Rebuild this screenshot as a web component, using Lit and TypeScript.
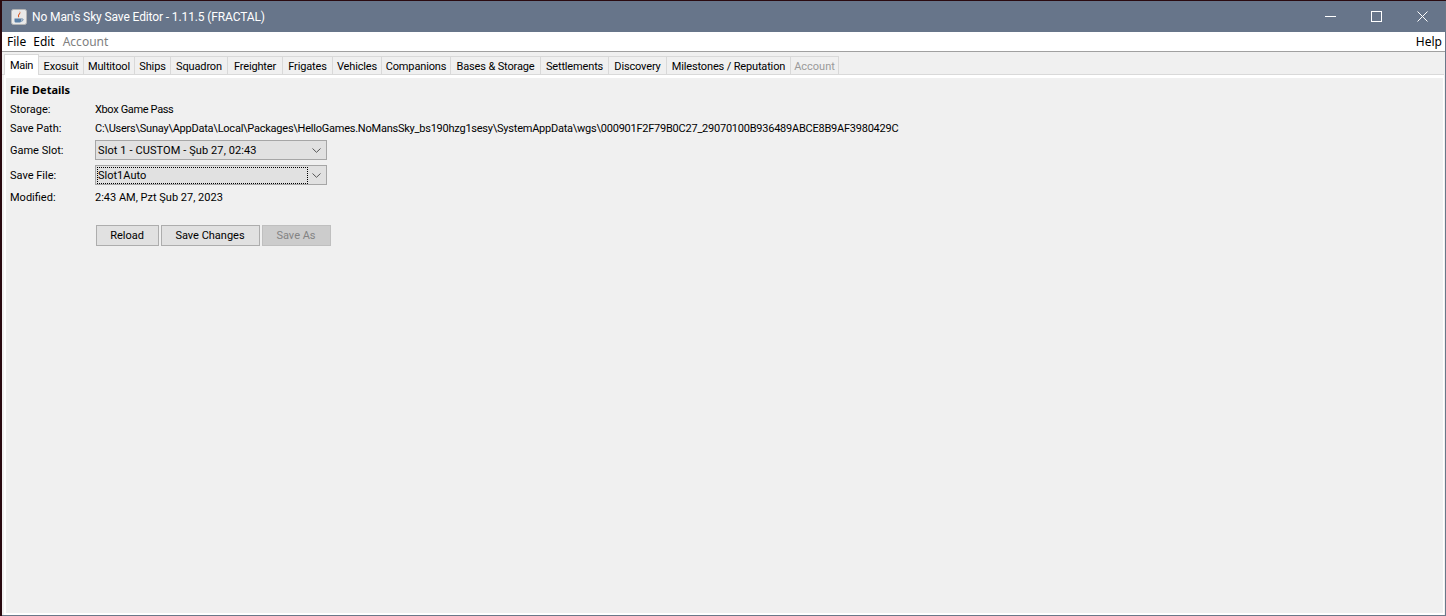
import { LitElement, html, css, svg } from "lit";
import { customElement } from "lit/decorators.js";

const TABS: [string, number][] = [
  ["Main", 35], ["Exosuit", 45], ["Multitool", 51], ["Ships", 36], ["Squadron", 57],
  ["Freighter", 55], ["Frigates", 50], ["Vehicles", 49], ["Companions", 69],
  ["Bases & Storage", 90], ["Settlements", 68], ["Discovery", 58],
  ["Milestones / Reputation", 124], ["Account", 48],
];

const chevron = svg`<svg class="chev" width="9" height="5" viewBox="0 0 9 5"><path d="M.5.500 4.500 4.300 8.500.500" fill="none" stroke="#555" stroke-width="1"/></svg>`;

@customElement("app-root")
export class AppRoot extends LitElement {
  static styles = css`
    :host { display: block; width: 1446px; height: 616px; background: #2a0a10; overflow: hidden;
      font-family: Roboto, Tahoma, sans-serif; font-size: 11px; color: #000; }
    .win { box-sizing: border-box; height: 616px; margin-left: 2px; margin-top: 1px; display: flex; flex-direction: column;
      background: #f0f0f0; border-right: 1px solid #6a7889; border-bottom: 2px solid #6a7889; }
    .title { height: 31px; flex: none; background: #67758a; color: #fff; display: flex; align-items: center; font-size: 12px; letter-spacing: -0.12px; }
    .appicon { margin-left: 9px; margin-right: 5px; }
    .title .t { flex: 1; }
    .wbtn { width: 46px; height: 31px; display: flex; align-items: center; justify-content: center; }
    .menu { height: 19px; flex: none; background: #fff; border-bottom: 1px solid #a0a0a0; display: flex; align-items: center; font-family: "Noto Sans", sans-serif; font-size: 12px; padding: 0 3px 0 5px; gap: 7px; }
    .menu .off { color: #808080; margin-left: 1px; }
    .menu .sp { flex: 1; }
    .tabs { display: flex; align-items: flex-end; height: 23px; flex: none; padding-left: 2px; box-sizing: border-box; border-bottom: 1px solid #d9d9d9; margin-right: 1px; }
    .tab { box-sizing: border-box; height: 19px; margin-bottom: -1px; text-align: center; line-height: 19px; border: 1px solid #d9d9d9; border-left: 0; background: #f0f0f0; white-space: nowrap; letter-spacing: -0.15px; }
    .tab.on { height: 21px; background: #fff; border-left: 1px solid #d9d9d9; border-bottom: 0; line-height: 21px; letter-spacing: -0.3px; }
    .tab.off { color: #9a9a9a; letter-spacing: 0; }
    .panel { flex: 1; margin: 0 1px 0 2px; border-top: 3px solid #fff; border-left: 2px solid #fff; border-right: 1px solid #fff; border-bottom: 2px solid #fff; padding: 5px 0 0 4px; }
    h3 { margin: 0; font: bold 11px "Noto Sans", sans-serif; height: 17px; line-height: 14px; }
    .form { display: grid; grid-template-columns: 85px 1fr; align-items: center; }
    .r1 { height: 19px; line-height: 19px; white-space: nowrap; }
    .xbox { letter-spacing: -0.35px; }
    .path { letter-spacing: -0.235px; }
    .slot { letter-spacing: 0.1px; }
    .combo { box-sizing: border-box; width: 232px; height: 20px; border: 1px solid #a6a6a6; background: #e1e1e1; display: flex; align-items: center; padding-left: 2px; }
    .combo .v { flex: 1; }
    .combo .v.focus { outline: 1px dotted #000; height: 15px; line-height: 15px; flex: none; width: 209px; }
    .chev { margin: 0 5px 0 auto; }
    .gap2b { margin-bottom: 2px; }
    .gap5 { margin-bottom: 5px; }
    .gap3t { margin-top: 3px; }
    .btns { display: flex; gap: 2px; margin: 18px 0 0 86px; }
    .btn { box-sizing: border-box; height: 21px; line-height: 19px; text-align: center; border: 1px solid #adadad; background: #e1e1e1; padding-right: 1px; }
    .btn.off { background: #cccccc; border-color: #bfbfbf; color: #838383; }
  `;

  render() {
    return html`<div class="win">
      <div class="title">
        <svg class="appicon" width="16" height="16" viewBox="0 0 16 16">
          <rect x=".5" y=".5" width="15" height="15" rx="2" fill="#e9e9e9" stroke="#b5b5b5"/>
          <path d="M8.500 2C10 4 6.500 5 7 7.500 7.500 9 8.500 8.500 8 7 7.500 5.500 11 4.500 8.500 2Z" fill="#d9541e"/>
          <path d="M3.500 9.500h6.500v2.500c0 1-.8 1.500-1.500 1.500h-3.500c-.8 0-1.500-.5-1.500-1.500Z" fill="#5a7fa6"/>
          <path d="M10 10h1.500c1 0 1 2-1.500 2.200" fill="none" stroke="#5a7fa6"/>
        </svg>
        <span class="t">No Man's Sky Save Editor - 1.11.5 (FRACTAL)</span>
        <div class="wbtn"><svg width="11" height="11" viewBox="0 0 11 11"><path d="M0 5.500h11" stroke="#fff"/></svg></div>
        <div class="wbtn"><svg width="11" height="11" viewBox="0 0 11 11"><rect x=".5" y=".5" width="10" height="10" fill="none" stroke="#fff"/></svg></div>
        <div class="wbtn"><svg width="11" height="11" viewBox="0 0 11 11"><path d="M.5.500l10 10M10.500.500l-10 10" stroke="#fff"/></svg></div>
      </div>
      <div class="menu"><span>File</span><span>Edit</span><span class="off">Account</span><span class="sp"></span><span>Help</span></div>
      <div class="tabs">
        ${TABS.map(([n, w], i) => html`<div class="tab ${i === 0 ? "on" : ""} ${n === "Account" ? "off" : ""}" style="width:${w}px">${n}</div>`)}
      </div>
      <div class="panel">
        <h3>File Details</h3>
        <div class="form">
          <div class="r1">Storage:</div><div class="r1 xbox">Xbox Game Pass</div>
          <div class="r1 gap2b">Save Path:</div><div class="r1 gap2b path">C:\\Users\\Sunay\\AppData\\Local\\Packages\\HelloGames.NoMansSky_bs190hzg1sesy\\SystemAppData\\wgs\\000901F2F79B0C27_29070100B936489ABCE8B9AF3980429C</div>
          <div class="gap5">Game Slot:</div><div class="combo gap5"><span class="v slot">Slot 1 - CUSTOM - Şub 27, 02:43</span>${chevron}</div>
          <div>Save File:</div><div class="combo"><span class="v focus">Slot1Auto</span>${chevron}</div>
          <div class="r1 gap3t">Modified:</div><div class="r1 gap3t">2:43 AM, Pzt Şub 27, 2023</div>
        </div>
        <div class="btns">
          <div class="btn" style="width:63px">Reload</div>
          <div class="btn" style="width:99px">Save Changes</div>
          <div class="btn off" style="width:69px">Save As</div>
        </div>
      </div>
    </div>`;
  }
}
